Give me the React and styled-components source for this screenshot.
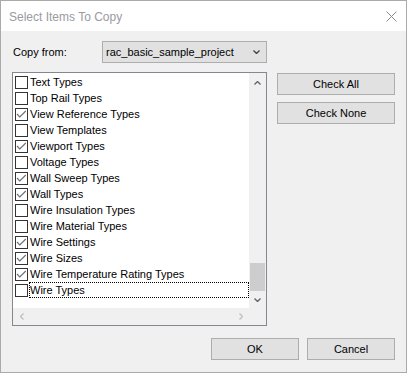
import React from "react";
import styled, { createGlobalStyle } from "styled-components";

const Global = createGlobalStyle`
  html, body { margin: 0; padding: 0; background: #ffffff; }
  * { box-sizing: border-box; }
`;

const FONT = `"Liberation Sans", Arial, sans-serif`;

const Window = styled.div`
  width: 407px;
  height: 373px;
  border: 1px solid #aaaaaa;
  background: #f0f0f0;
  display: flex;
  flex-direction: column;
  font-family: ${FONT};
  font-size: 11px;
  color: #000;
`;

const TitleBar = styled.div`
  height: 30px;
  background: #ffffff;
  display: flex;
  align-items: center;
  justify-content: space-between;
  padding: 0 9px 0 8px;
`;

const Title = styled.span`
  font-size: 12px;
  color: #9a9aa2;
  margin-top: 1px;
`;

const Body = styled.div`
  flex: 1;
  display: flex;
  flex-direction: column;
  padding: 10px 11px 12px 11px;
`;

const TopRow = styled.div`
  height: 22px;
  display: flex;
  align-items: center;
`;

const Label = styled.span`
  width: 90px;
  padding-left: 1px;
`;

const Select = styled.div`
  width: 165px;
  height: 22px;
  background: #e1e1e1;
  border: 1px solid #adadad;
  display: flex;
  align-items: center;
  justify-content: space-between;
  padding: 0 6px 0 3px;
`;

const Middle = styled.div`
  margin-top: 9px;
  display: flex;
  gap: 10px;
`;

const ListBox = styled.div`
  width: 255px;
  height: 254px;
  border: 1px solid #828790;
  background: #ffffff;
  display: grid;
  grid-template-columns: 1fr 17px;
  grid-template-rows: 1fr 17px;
`;

const Rows = styled.div`
  padding-top: 1px;
  overflow: hidden;
`;

const Row = styled.div`
  height: 16px;
  display: flex;
  align-items: flex-start;
`;

const Box = styled.div`
  width: 13px;
  height: 13px;
  margin: 2px 0 0 2px;
  border: 1px solid #333333;
  background: #ffffff;
  flex: none;
  display: flex;
`;

const ItemText = styled.div`
  flex: 1;
  height: 16px;
  margin-left: 1px;
  line-height: 14px;
  border: 1px ${(p) => (p.$focus ? "dotted #000" : "solid transparent")};
  white-space: nowrap;
`;

const VScroll = styled.div`
  background: #f0f0f0;
  display: flex;
  flex-direction: column;
`;

const ArrowCell = styled.div`
  height: 17px;
  display: flex;
  align-items: center;
  justify-content: center;
  padding-top: ${(p) => p.$pt || 0}px;
`;

const Track = styled.div`
  flex: 1;
  display: flex;
  flex-direction: column;
  justify-content: flex-end;
  align-items: center;
`;

const Thumb = styled.div`
  width: 15px;
  height: 28px;
  background: #cdcdcd;
`;

const HScroll = styled.div`
  background: #f0f0f0;
  display: flex;
  justify-content: space-between;
  align-items: center;
`;

const HArrow = styled.div`
  width: 17px;
  height: 17px;
  display: flex;
  align-items: center;
  justify-content: center;
`;

const Corner = styled.div`
  background: #f0f0f0;
`;

const Side = styled.div`
  margin-top: 1px;
  display: flex;
  flex-direction: column;
  gap: 7px;
`;

const Button = styled.div`
  width: ${(p) => p.$w}px;
  height: 22px;
  background: #e1e1e1;
  border: 1px solid #adadad;
  display: flex;
  align-items: center;
  justify-content: center;
  font-size: 11px;
`;

const Footer = styled.div`
  margin-top: 12px;
  display: flex;
  justify-content: flex-end;
  gap: 8px;
`;

const items = [
  ["Text Types", false],
  ["Top Rail Types", false],
  ["View Reference Types", true],
  ["View Templates", false],
  ["Viewport Types", true],
  ["Voltage Types", false],
  ["Wall Sweep Types", true],
  ["Wall Types", true],
  ["Wire Insulation Types", false],
  ["Wire Material Types", false],
  ["Wire Settings", true],
  ["Wire Sizes", true],
  ["Wire Temperature Rating Types", true],
  ["Wire Types", false],
];

const Check = () => (
  <svg width="11" height="11" viewBox="0 0 11 11">
    <polyline points="1,5 3.8,8 9.8,2" fill="none" stroke="#6e6e6e" strokeWidth="1.1" />
  </svg>
);

const Chevron = ({ dir = "down", color = "#606060" }) => {
  const pts = {
    down: "0.5,0.5 3.5,3.5 6.5,0.5",
    up: "0.5,3.5 3.5,0.5 6.5,3.5",
  };
  return (
    <svg width="7" height="4" viewBox="0 0 7 4" style={{ display: "block" }}>
      <polyline points={pts[dir]} fill="none" stroke={color} strokeWidth="1.3" />
    </svg>
  );
};

const HChevron = ({ dir }) => (
  <svg width="4" height="7" viewBox="0 0 4 7" style={{ display: "block" }}>
    <polyline
      points={dir === "left" ? "3.5,0.5 0.5,3.5 3.5,6.5" : "0.5,0.5 3.5,3.5 0.5,6.5"}
      fill="none"
      stroke="#bfbfbf"
      strokeWidth="1.3"
    />
  </svg>
);

export default function App() {
  return (
    <>
      <Global />
      <Window>
        <TitleBar>
          <Title>Select Items To Copy</Title>
          <svg width="11" height="11" viewBox="0 0 11 11">
            <path d="M0.5 0.5 L10.5 10.5 M10.5 0.5 L0.5 10.5" stroke="#8a8a8a" strokeWidth="1" />
          </svg>
        </TitleBar>
        <Body>
          <TopRow>
            <Label>Copy from:</Label>
            <Select>
              <span>rac_basic_sample_project</span>
              <Chevron dir="down" color="#404040" />
            </Select>
          </TopRow>
          <Middle>
            <ListBox>
              <Rows>
                {items.map(([name, checked], i) => (
                  <Row key={name}>
                    <Box>{checked && <Check />}</Box>
                    <ItemText $focus={i === items.length - 1}>{name}</ItemText>
                  </Row>
                ))}
              </Rows>
              <VScroll>
                <ArrowCell $pt={3}>
                  <Chevron dir="up" />
                </ArrowCell>
                <Track>
                  <Thumb />
                </Track>
                <ArrowCell>
                  <Chevron dir="down" />
                </ArrowCell>
              </VScroll>
              <HScroll>
                <HArrow>
                  <HChevron dir="left" />
                </HArrow>
                <HArrow>
                  <HChevron dir="right" />
                </HArrow>
              </HScroll>
              <Corner />
            </ListBox>
            <Side>
              <Button $w={118}>Check All</Button>
              <Button $w={118}>Check None</Button>
            </Side>
          </Middle>
          <Footer>
            <Button $w={88}>OK</Button>
            <Button $w={88}>Cancel</Button>
          </Footer>
        </Body>
      </Window>
    </>
  );
}
